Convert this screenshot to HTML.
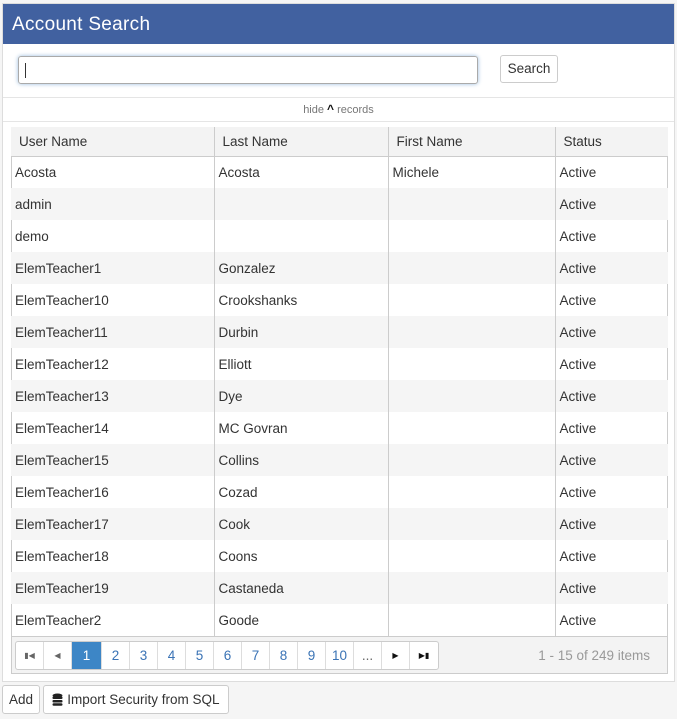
<!DOCTYPE html>
<html><head><style>
*{box-sizing:border-box}
body{margin:0;background:#f5f5f5;font-family:"Liberation Sans",sans-serif;font-size:13.5px;color:#333;width:677px;height:719px;overflow:hidden;position:relative}
.panel{position:absolute;left:2px;top:3px;width:673px;height:679px;background:#fff;border:1px solid #ddd}
.hdr{height:40px;background:#4161a0;color:#fff;font-size:19px;padding:10px 0 0 9px;letter-spacing:.3px}
.inp{position:absolute;left:15px;top:52px;width:460px;height:28px;border:1px solid #aaa;border-radius:3px;box-shadow:0 0 4px #9bd}
.inp:after{content:"";position:absolute;left:6px;top:6px;width:1px;height:15px;background:#333}
.btn{position:absolute;background:#fff;border:1px solid #ccc;border-radius:3px;font-size:13.5px;text-align:center}
.hide{position:absolute;left:0;top:93px;width:671px;height:25px;border-top:1px solid #e5e5e5;border-bottom:1px solid #e5e5e5;text-align:center;font-size:11px;color:#777;line-height:23px}
table{position:absolute;left:8px;top:123px;width:657px;border-collapse:collapse}
td,th{border-left:1px solid #ccc;height:32px;padding:0 4px;text-align:left;font-weight:normal;white-space:nowrap}
th{background:#f3f3f3;height:29px;padding-left:8px;border-bottom:1px solid #ccc}
tr:nth-child(odd) td{background:#f5f5f5}
.tbl{position:absolute;left:8px;top:123px;width:657px;height:547px;border:1px solid #ccc}
.pg{position:absolute;left:8px;top:632px;width:657px;height:38px;background:#f3f3f3;border:1px solid #ccc}
.pgb{position:absolute;top:4px;left:3px;height:29px;display:flex;border:1px solid #ccc;border-radius:3px;background:#fff}
.pgb span{width:28px;text-align:center;line-height:27px;border-right:1px solid #ddd;color:#3a73b5;font-size:13.5px}
.pgb span.g{color:#666;font-size:8px}
.pgb span.a{background:#3d86c6;color:#fff;width:30px}
</style></head><body>
<div class="panel">
<div class="hdr">Account Search</div>
<div class="inp"></div>
<div class="btn" style="left:497px;top:51px;width:58px;height:28px;line-height:26px">Search</div>
<div class="hide">hide <b style="color:#111;font-size:12px">&#94;</b> records</div>
<div class="tbl"></div>
<table>
<tr><th style="border-left:none;width:203px">User Name</th><th style="width:174px">Last Name</th><th style="width:167px">First Name</th><th>Status</th></tr>
<tr><td style="border-left:none">Acosta</td><td>Acosta</td><td>Michele</td><td>Active</td></tr>
<tr><td style="border-left:none">admin</td><td></td><td></td><td>Active</td></tr>
<tr><td style="border-left:none">demo</td><td></td><td></td><td>Active</td></tr>
<tr><td style="border-left:none">ElemTeacher1</td><td>Gonzalez</td><td></td><td>Active</td></tr>
<tr><td style="border-left:none">ElemTeacher10</td><td>Crookshanks</td><td></td><td>Active</td></tr>
<tr><td style="border-left:none">ElemTeacher11</td><td>Durbin</td><td></td><td>Active</td></tr>
<tr><td style="border-left:none">ElemTeacher12</td><td>Elliott</td><td></td><td>Active</td></tr>
<tr><td style="border-left:none">ElemTeacher13</td><td>Dye</td><td></td><td>Active</td></tr>
<tr><td style="border-left:none">ElemTeacher14</td><td>MC Govran</td><td></td><td>Active</td></tr>
<tr><td style="border-left:none">ElemTeacher15</td><td>Collins</td><td></td><td>Active</td></tr>
<tr><td style="border-left:none">ElemTeacher16</td><td>Cozad</td><td></td><td>Active</td></tr>
<tr><td style="border-left:none">ElemTeacher17</td><td>Cook</td><td></td><td>Active</td></tr>
<tr><td style="border-left:none">ElemTeacher18</td><td>Coons</td><td></td><td>Active</td></tr>
<tr><td style="border-left:none">ElemTeacher19</td><td>Castaneda</td><td></td><td>Active</td></tr>
<tr><td style="border-left:none">ElemTeacher2</td><td>Goode</td><td></td><td>Active</td></tr>
</table>
<div class="pg">
<div class="pgb"><span class="g">&#9646;&#9664;</span><span class="g">&#9664;</span><span class="a">1</span><span>2</span><span>3</span><span>4</span><span>5</span><span>6</span><span>7</span><span>8</span><span>9</span><span>10</span><span style="color:#666">...</span><span class="g" style="color:#111">&#9654;</span><span class="g" style="color:#111;border-right:none">&#9654;&#9646;</span></div>
<div style="position:absolute;right:17px;top:11px;color:#999">1 - 15 of 249 items</div>
</div>
</div>
<div class="btn" style="left:2px;top:685px;width:38px;height:29px;line-height:27px">Add</div>
<div class="btn" style="left:43px;top:685px;width:186px;height:29px;line-height:27px"><svg width="11" height="13" viewBox="0 0 11 13" style="vertical-align:-2px"><ellipse cx="5.5" cy="2.5" rx="5" ry="2" fill="#222"/><rect x=".5" y="3.5" width="10" height="2.5" rx="1" fill="#222"/><rect x=".5" y="7" width="10" height="2.5" rx="1" fill="#222"/><rect x=".5" y="10.3" width="10" height="2.5" rx="1.2" fill="#222"/></svg> Import Security from SQL</div>
</body></html>
